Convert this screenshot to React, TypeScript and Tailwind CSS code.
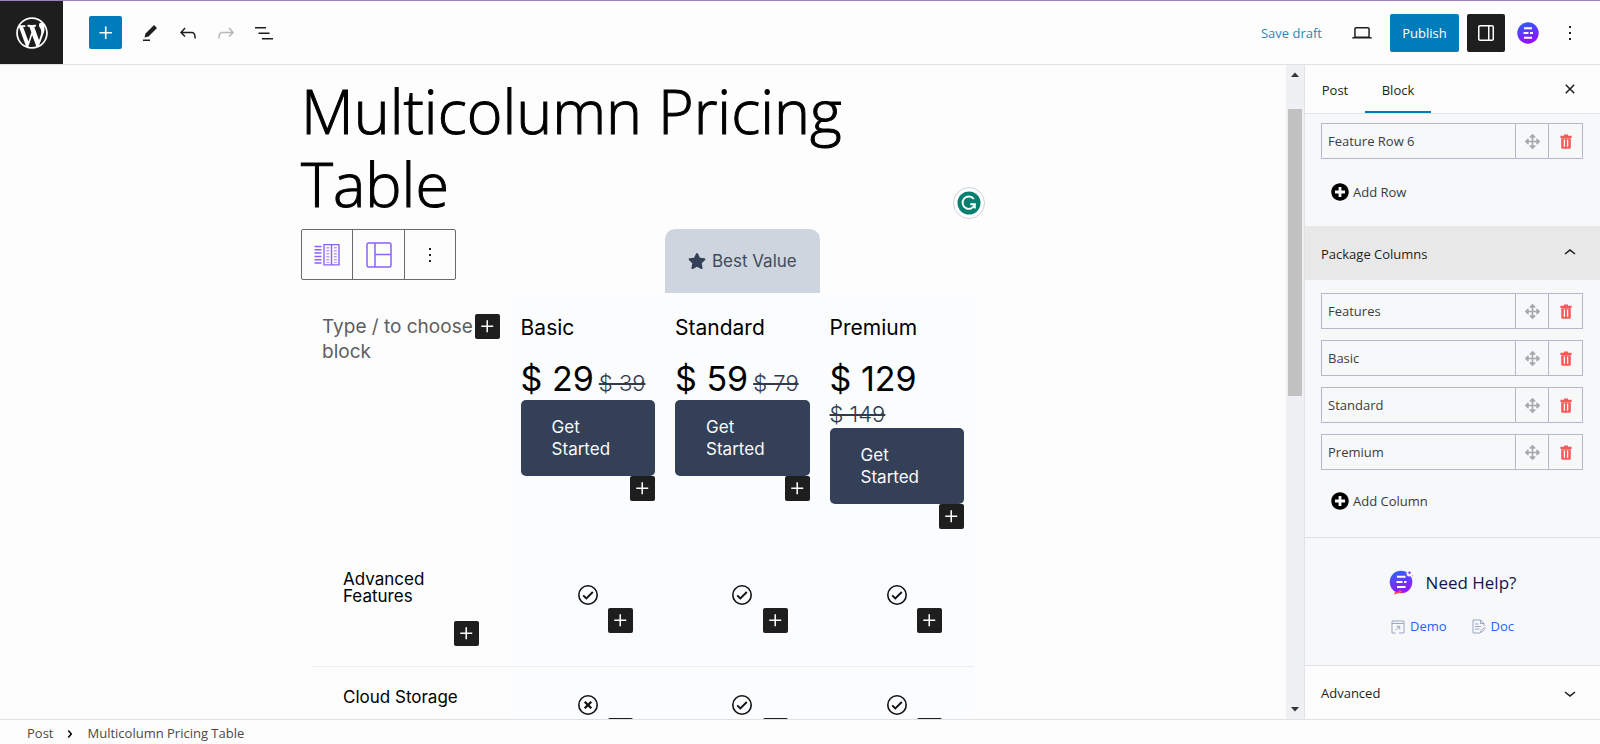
import React from "react";
import { FaArrowsAlt, FaPlusCircle, FaStar } from "react-icons/fa";

const paths = {
  wordpress:
    "M20 10c0-5.51-4.49-10-10-10C4.48 0 0 4.49 0 10c0 5.52 4.48 10 10 10 5.51 0 10-4.48 10-10zM7.78 15.37L4.37 6.22c.55-.02 1.17-.08 1.17-.08.5-.06.44-1.13-.06-1.11 0 0-1.45.11-2.37.11-.18 0-.37 0-.58-.01C4.12 2.69 6.87 1.11 10 1.11c2.33 0 4.45.87 6.05 2.34-.68-.11-1.65.39-1.65 1.58 0 .74.45 1.36.9 2.1.35.61.55 1.36.55 2.46 0 1.49-1.4 5-1.4 5l-3.03-8.37c.54-.02.82-.17.82-.17.5-.05.44-1.25-.06-1.22 0 0-1.44.12-2.38.12-.87 0-2.33-.12-2.33-.12-.5-.03-.56 1.2-.06 1.22l.92.08 1.26 3.41zM17.41 10c.24-.64.74-1.87.43-4.25.7 1.29 1.05 2.71 1.05 4.25 0 3.29-1.73 6.24-4.4 7.78.97-2.59 1.94-5.2 2.92-7.78zM6.1 18.09C3.12 16.65 1.11 13.53 1.11 10c0-1.3.23-2.48.72-3.59C3.25 10.3 4.67 14.2 6.1 18.09zm4.03-6.63l2.58 6.98c-.86.29-1.76.45-2.71.45-.79 0-1.57-.11-2.29-.33.81-2.38 1.62-4.74 2.42-7.1z",
  edit: "m19 7-3-3-8.5 8.5-1 4 4-1L19 7Zm-7 11.5H5V20h7v-1.5Z",
  undo: "M18.3 11.7c-.6-.6-1.4-.9-2.3-.9H6.7l2.9-3.3-1.1-1-4.5 5L8.5 16l1-1-2.7-2.7H16c.5 0 .9.2 1.3.5 1 1 1 3.4 1 4.5v.3h1.5v-.2c0-1.5 0-4.3-1.5-5.7z",
  redo: "M15.6 6.5l-1.1 1 2.9 3.3H8c-.9 0-1.7.3-2.3.9-1.4 1.5-1.4 4.2-1.4 5.6v.2h1.5v-.3c0-1.1 0-3.5 1-4.5.3-.3.7-.5 1.3-.5h9.2L14.5 15l1.1 1.1 4.6-4.6-4.6-5z",
  list: "M3 6h11v1.5H3V6Zm3.5 5.5h11V13h-11v-1.5ZM21 17H10v1.5h11V17Z",
  laptop:
    "M20.5 16h-.7V8c0-1.1-.9-2-2-2H6.2c-1.1 0-2 .9-2 2v8h-.7c-.8 0-1.5.7-1.5 1.5h20c0-.8-.7-1.5-1.5-1.5zM5.7 8c0-.3.2-.5.5-.5h11.6c.3 0 .5.2.5.5v7.6H5.7V8z",
  drawer:
    "M18 4H6c-1.1 0-2 .9-2 2v12c0 1.1.9 2 2 2h12c1.1 0 2-.9 2-2V6c0-1.1-.9-2-2-2zm-4 14.5H6c-.3 0-.5-.2-.5-.5V6c0-.3.2-.5.5-.5h8v13zm4.5-.5c0 .3-.2.5-.5.5h-2.5v-13H18c.3 0 .5.2.5.5v12z",
  more: "M13 19h-2v-2h2v2zm0-6h-2v-2h2v2zm0-6h-2V5h2v2z",
  close:
    "M12 13.06l3.712 3.713 1.061-1.06L13.061 12l3.712-3.712-1.06-1.06L12 10.938 8.288 7.227l-1.061 1.06L10.939 12l-3.712 3.712 1.06 1.061L12 13.061z",
  down: "M17.5 11.6L12 16l-5.5-4.4.9-1.2L12 14l4.5-3.6 1 1.2z",
  up: "M6.5 12.4L12 8l5.5 4.4-.9 1.2L12 10l-4.5 3.6-1-1.2z",
  right:
    "M10.8622 8.04053L14.2805 12.0286L10.8622 16.0167L9.72327 15.0405L12.3049 12.0286L9.72327 9.01672L10.8622 8.04053Z",
  plus: "M11 12.5V17.5H12.5V12.5H17.5V11H12.5V6H11V11H6V12.5H11Z",
};

function Icon({ name, className = "size-6" }: { name: keyof typeof paths; className?: string }) {
  return (
    <svg
      viewBox={name === "wordpress" ? "-2 -2 24 24" : "0 0 24 24"}
      className={"shrink-0 " + className}
      fill="currentColor"
      aria-hidden="true"
    >
      <path d={paths[name]} />
    </svg>
  );
}

function Trash() {
  return (
    <svg viewBox="0 0 12 15" className="h-[15px] w-3" aria-hidden="true">
      <path d="M4 0.5h4v1.2h3.6v2.2H0.4V1.7H4z" fill="#f9595a" />
      <path d="M1.2 4.2h9.6v9.3a1.3 1.3 0 0 1-1.3 1.3h-7a1.3 1.3 0 0 1-1.3-1.3z" fill="#f9595a" />
      <path d="M4.4 5.4v7.4M7.6 5.4v7.4" stroke="#fff" strokeWidth="1.3" />
    </svg>
  );
}

function StatusIcon({ included }: { included: boolean }) {
  return (
    <svg
      viewBox="0 0 20 20"
      className="size-5"
      fill="none"
      stroke="#111"
      role="img"
      aria-label={included ? "Included" : "Not included"}
    >
      <circle cx="10" cy="10" r="9.2" strokeWidth="1.6" />
      {included ? (
        <path d="M5.2 10.4L8.3 13.5L14.8 7" strokeWidth="1.9" />
      ) : (
        <path d="M6.7 6.7L13.3 13.3M13.3 6.7L6.7 13.3" strokeWidth="2.3" />
      )}
    </svg>
  );
}

function PluginBadge() {
  return (
    <svg viewBox="0 0 22 22" className="size-[22px]" aria-hidden="true">
      <defs>
        <linearGradient id="badge" x1="0.3" y1="0" x2="0.6" y2="1">
          <stop offset="0" stopColor="#2d5bff" />
          <stop offset="1" stopColor="#9a0cff" />
        </linearGradient>
      </defs>
      <circle cx="11" cy="11" r="10.7" fill="url(#badge)" />
      <path d="M7 6.2h8M6.5 11h5M13 11h3M7 15.8h8" stroke="#fff" strokeWidth="1.9" />
    </svg>
  );
}

function HelpBadge() {
  return (
    <svg viewBox="0 0 25 25" className="size-[25px]" aria-hidden="true">
      <defs>
        <linearGradient id="help" x1="0.3" y1="0" x2="0.6" y2="1">
          <stop offset="0" stopColor="#2f62ff" />
          <stop offset="1" stopColor="#9d12ff" />
        </linearGradient>
      </defs>
      <circle cx="12" cy="12" r="11.3" fill="url(#help)" />
      <circle cx="20.5" cy="3.4" r="3" fill="#f7f8fb" />
      <circle cx="20.5" cy="2.8" r="1.2" fill="#7a3cff" />
      <circle cx="23.6" cy="5.8" r="0.8" fill="#ffb37a" />
      <path d="M5 24.5l1-3 2.5 0.5 2.5-2 3 2.200c-3 0.6-6 1.600-9 2.300z" fill="#fb4a4f" />
      <path d="M8 6.8h8.5M7.5 12h6M15 12h2.5M8 17h8.5" stroke="#fff" strokeWidth="1.9" />
    </svg>
  );
}

function TableBlockIcon() {
  return (
    <svg viewBox="0 0 26 24" className="h-6 w-[26px]" fill="none" stroke="#8b62f5" aria-hidden="true">
      <path d="M0.5 3.5h7M0.5 6.8h7M0.5 10.1h7M0.5 13.4h7M0.5 16.7h7M0.5 20h7" strokeWidth="1.5" />
      <path d="M10 1.6h15v20.3H10zM17.5 1.6v20.3" strokeWidth="1.4" />
      <path d="M13.8 4v16M21.3 4v16" strokeWidth="3" strokeDasharray="1.4 1.6" opacity="0.6" />
    </svg>
  );
}

function LayoutIcon() {
  return (
    <svg viewBox="0 0 26 26" className="size-[26px]" fill="none" stroke="#8b62f5" strokeWidth="1.5" aria-hidden="true">
      <rect x="1" y="1" width="24" height="24" rx="1.5" />
      <path d="M9 1v24M9 12.5h16" />
    </svg>
  );
}

function DemoIcon() {
  return (
    <svg viewBox="0 0 14 14" className="size-[14px]" fill="none" stroke="#9aa5c4" aria-hidden="true">
      <path d="M4.5 13H1V1h12v12H8M1 3.5h12M4.5 10l4-3.5M5.5 6.3h3.2v3.2" />
    </svg>
  );
}

function DocIcon() {
  return (
    <svg viewBox="0 0 14 15" className="h-[15px] w-[14px]" fill="none" stroke="#9aa5c4" aria-hidden="true">
      <path d="M8 14H1V1h7.5L12 4.5V7M8.5 1v3.5H12M3 5h3.5M3 7.5h6M3 10h4.5M8.5 13.5l.5-2L12 8.5l1.2 1.2-3 3z" />
    </svg>
  );
}

function Inserter() {
  return (
    <button
      type="button"
      aria-label="Add block"
      className="flex size-[25px] shrink-0 items-center justify-center rounded-xs bg-[#1e1e1e] text-white"
    >
      <Icon name="plus" className="size-[25px]" />
    </button>
  );
}

function ToolButton({ label, icon, muted }: { label: string; icon: keyof typeof paths; muted?: boolean }) {
  return (
    <button
      type="button"
      aria-label={label}
      className={"flex size-[38px] items-center justify-center " + (muted ? "text-[#b8b8b8]" : "text-[#1e1e1e]")}
    >
      <Icon name={icon} />
    </button>
  );
}

function Header() {
  return (
    <header className="flex h-16 shrink-0 items-center border-b border-[#e2e2e2]">
      <a href="#" aria-label="View posts" className="flex size-[63px] items-center justify-center bg-[#1e1e1e] text-white">
        <Icon name="wordpress" className="size-[38px]" />
      </a>
      <button
        type="button"
        aria-label="Toggle block inserter"
        className="ml-[26px] mr-[9px] flex size-[33px] items-center justify-center rounded-xs bg-[#007cba] text-white"
      >
        <Icon name="plus" className="size-[26px]" />
      </button>
      <ToolButton label="Tools" icon="edit" />
      <ToolButton label="Undo" icon="undo" />
      <ToolButton label="Redo" icon="redo" muted />
      <ToolButton label="Document overview" icon="list" />
      <div className="ml-auto flex items-center pr-[11px]">
        <button type="button" className="pt-[3px] text-[13px] text-[#3582b5]">
          Save draft
        </button>
        <button type="button" aria-label="Preview" className="ml-[21px] flex size-[38px] items-center justify-center">
          <Icon name="laptop" />
        </button>
        <button
          type="button"
          className="ml-[9px] flex h-[38px] w-[69px] items-center justify-center rounded-xs bg-[#007cba] pt-[3px] text-[13px] font-medium text-white"
        >
          Publish
        </button>
        <button
          type="button"
          aria-label="Settings"
          className="ml-2 flex size-[38px] items-center justify-center rounded-xs bg-[#1e1e1e] text-white"
        >
          <Icon name="drawer" />
        </button>
        <button type="button" aria-label="Block settings" className="ml-3 flex items-center justify-center">
          <PluginBadge />
        </button>
        <button type="button" aria-label="Options" className="ml-3 flex size-[38px] items-center justify-center">
          <Icon name="more" />
        </button>
      </div>
    </header>
  );
}

const plans = [
  { name: "Basic", price: "$ 29", old: "$ 39" },
  { name: "Standard", price: "$ 59", old: "$ 79" },
  { name: "Premium", price: "$ 129", old: "$ 149" },
];

const features = [
  { name: "Advanced Features", values: [true, true, true] },
  { name: "Cloud Storage", values: [false, true, true] },
];

function PricingTable() {
  return (
    <table className="w-full table-fixed border-separate border-spacing-0 font-['Inter',sans-serif] text-black">
      <colgroup>
        <col className="w-[30%]" />
        <col />
        <col />
        <col />
      </colgroup>
      <thead>
        <tr className="h-[67px]">
          <td />
          <td />
          <td className="pb-[3px] align-top">
            <div className="flex h-16 items-center justify-center gap-[6px] rounded-t-[10px] bg-[#cfd5de] text-[17px] text-[#414a5c]">
              <FaStar className="size-[18px] text-[#334058]" aria-hidden="true" />
              <span className="pt-[2px]">Best Value</span>
            </div>
          </td>
          <td />
        </tr>
        <tr className="h-[261px]">
          <td className="pl-[10px] pr-[11px] pt-[18px] align-top">
            <div className="flex items-start">
              <p className="min-w-0 flex-1 whitespace-pre text-[19px] leading-[25px] text-[#5e5e5e]">{"Type / to choose\nblock"}</p>
              <Inserter />
            </div>
          </td>
          {plans.map((plan) => (
            <th key={plan.name} scope="col" className="bg-[#fafcfe] px-[10px] pt-[19px] text-left align-top font-normal">
              <h3 className="text-[21px] leading-[26px]">{plan.name}</h3>
              <div className="mt-[17px] flex flex-wrap items-baseline gap-x-[5px]">
                <span className="text-[34px] leading-[42px]">{plan.price}</span>
                <s className="text-[22px] font-light leading-[28px] text-[#333a4d]">{plan.old}</s>
              </div>
              <button
                type="button"
                className="block w-full rounded-[5px] bg-[#334058] px-[31px] py-4 text-left text-[17px] leading-[22px] text-[#fafafa]"
              >
                Get Started
              </button>
              <div className="flex justify-end">
                <Inserter />
              </div>
            </th>
          ))}
        </tr>
      </thead>
      <tbody>
        {features.map((feature) => (
          <tr key={feature.name} className="h-[110px]">
            <th scope="row" className="border-b border-[#eceef3] pl-[31px] pr-8 pt-[14px] text-left align-top font-normal">
              <div className="flex min-h-[33px] w-[120px] items-center text-[17px] leading-[17px]">{feature.name}</div>
              <div className="mt-4 flex justify-end">
                <Inserter />
              </div>
            </th>
            {feature.values.map((included, i) => (
              <td key={i} className="border-b border-[#ecedf0] bg-[#fafcfe] px-8 pt-7 align-top">
                <div className="flex justify-center">
                  <StatusIcon included={included} />
                </div>
                <div className="mt-[3px] flex justify-end">
                  <Inserter />
                </div>
              </td>
            ))}
          </tr>
        ))}
      </tbody>
    </table>
  );
}

function Canvas() {
  return (
    <main className="min-w-0 flex-1 overflow-hidden">
      <div className="relative mx-auto max-w-[684px] pt-[9px]">
        <h1 className="text-[61px] leading-[73px] font-light text-black [-webkit-text-stroke:1px_black]">
          Multicolumn Pricing Table
        </h1>
        <div className="absolute right-0 top-[122px] flex size-8 items-center justify-center rounded-full border border-[#cdd2de] bg-white">
          <svg viewBox="0 0 24 24" className="size-6" aria-hidden="true">
            <circle cx="12" cy="12" r="11.5" fill="#05806f" />
            <path
              d="M16.8 8A6.2 6.2 0 1 0 17.8 13.2H13.2M17.8 13.2V17.5"
              fill="none"
              stroke="#fff"
              strokeWidth="1.9"
            />
          </svg>
        </div>
        <div className="relative mt-[9px] px-[11px]">
          <div
            role="toolbar"
            aria-label="Block tools"
            className="absolute left-0 top-0 flex h-[51px] divide-x divide-[#6a6a6a] rounded-xs border border-[#6a6a6a] bg-[#fdfdfd]"
          >
            <button type="button" aria-label="Pricing table" className="flex w-[51px] items-center justify-center">
              <TableBlockIcon />
            </button>
            <button type="button" aria-label="Layout" className="flex w-[52px] items-center justify-center">
              <LayoutIcon />
            </button>
            <button type="button" aria-label="Options" className="flex w-[50px] items-center justify-center">
              <Icon name="more" />
            </button>
          </div>
          <PricingTable />
        </div>
      </div>
    </main>
  );
}

function ScrollBar() {
  return (
    <div className="flex w-[18px] shrink-0 flex-col items-center bg-[#eff0f3]" aria-hidden="true">
      <svg viewBox="0 0 8 5" className="mt-[7px] h-[5px] w-2">
        <path d="M0 5L4 0.5L8 5z" fill="#333" />
      </svg>
      <div className="mt-8 h-[287px] w-[14px] bg-[#c1c1c1]" />
      <svg viewBox="0 0 8 5" className="mb-[7px] mt-auto h-[5px] w-2">
        <path d="M0 0L4 4.5L8 0z" fill="#333" />
      </svg>
    </div>
  );
}

function FieldRow({ value }: { value: string }) {
  return (
    <div className="flex h-9 divide-x divide-[#b3b8ca] border border-[#b3b8ca]">
      <input
        type="text"
        aria-label={value + " label"}
        defaultValue={value}
        className="min-w-0 flex-1 bg-transparent px-[6px] pt-[2px] text-[13px] text-[#3c3c3c] outline-none"
      />
      <button type="button" aria-label={"Move " + value} className="flex w-[33px] items-center justify-center text-[#a8a9ad]">
        <FaArrowsAlt className="size-[15px]" />
      </button>
      <button type="button" aria-label={"Delete " + value} className="flex w-[33px] items-center justify-center">
        <Trash />
      </button>
    </div>
  );
}

function AddButton({ children }: { children: React.ReactNode }) {
  return (
    <button type="button" className="ml-[10px] flex h-6 items-center gap-1 text-[13px] text-[#3a3a3a]">
      <FaPlusCircle className="size-[18px] text-black" aria-hidden="true" />
      <span className="pt-[2px]">{children}</span>
    </button>
  );
}

function Sidebar() {
  return (
    <aside className="flex w-[296px] shrink-0 flex-col border-l border-[#e2e3e8] bg-[#f7f8fa]">
      <div className="flex h-[49px] shrink-0 items-stretch border-b border-[#e2e3e8] bg-[#fdfdfd] text-[13px] font-medium text-[#1e1e1e]">
        <button type="button" className="w-[60px] pt-1">
          Post
        </button>
        <button type="button" className="w-[66px] border-b-2 border-[#007cba] pt-[6px]">
          Block
        </button>
        <button type="button" aria-label="Close settings" className="ml-auto mr-[11px] flex w-[38px] items-center justify-center">
          <Icon name="close" />
        </button>
      </div>
      <div className="pb-[22px] pl-4 pr-[17px] pt-[9px]">
        <FieldRow value="Feature Row 6" />
        <div className="mt-[21px]">
          <AddButton>Add Row</AddButton>
        </div>
      </div>
      <button
        type="button"
        className="flex h-[54px] shrink-0 items-center justify-between bg-[#e8e8e8] pl-4 pr-[18px] text-[13px] font-medium text-[#1e1e1e]"
      >
        <span className="pt-[3px]">Package Columns</span>
        <Icon name="up" />
      </button>
      <div className="border-b border-[#dcdde1] pb-6 pl-4 pr-[17px] pt-[13px]">
        <div className="flex flex-col gap-[11px]">
          <FieldRow value="Features" />
          <FieldRow value="Basic" />
          <FieldRow value="Standard" />
          <FieldRow value="Premium" />
        </div>
        <div className="mt-[19px]">
          <AddButton>Add Column</AddButton>
        </div>
      </div>
      <div className="flex flex-1 flex-col items-center border-b border-[#e2e3e8] pt-8">
        <h2 className="flex items-center gap-3 text-[17px] leading-6 text-[#14144b]">
          <HelpBadge />
          Need Help?
        </h2>
        <div className="mt-[22px] flex gap-[25px] text-[13px] text-[#2563ff]">
          <a href="#demo" className="flex items-center gap-[5px]">
            <DemoIcon />
            Demo
          </a>
          <a href="#doc" className="flex items-center gap-[5px]">
            <DocIcon />
            Doc
          </a>
        </div>
      </div>
      <button
        type="button"
        className="flex h-[53px] shrink-0 items-center justify-between bg-[#fdfdfd] pl-4 pr-[18px] text-[13px] font-medium text-[#1e1e1e]"
      >
        <span className="pt-[3px]">Advanced</span>
        <Icon name="down" />
      </button>
    </aside>
  );
}

export default function App() {
  return (
    <div className="flex h-screen flex-col overflow-hidden border-t border-[#9b7fc0] bg-[#fdfdfd] font-['Open_Sans','Noto_Sans',sans-serif] text-[#1e1e1e]">
      <Header />
      <div className="flex min-h-0 flex-1">
        <Canvas />
        <ScrollBar />
        <Sidebar />
      </div>
      <footer className="flex h-[25px] shrink-0 items-center border-t border-[#e2e2e2] pl-[27px] pt-[3px] text-[13px] text-[#4a4a4a]">
        <nav aria-label="Block breadcrumb" className="flex items-center">
          <a href="#post">Post</a>
          <Icon name="right" className="mx-[5px] size-6 text-black" />
          <a href="#block">Multicolumn Pricing Table</a>
        </nav>
      </footer>
    </div>
  );
}
